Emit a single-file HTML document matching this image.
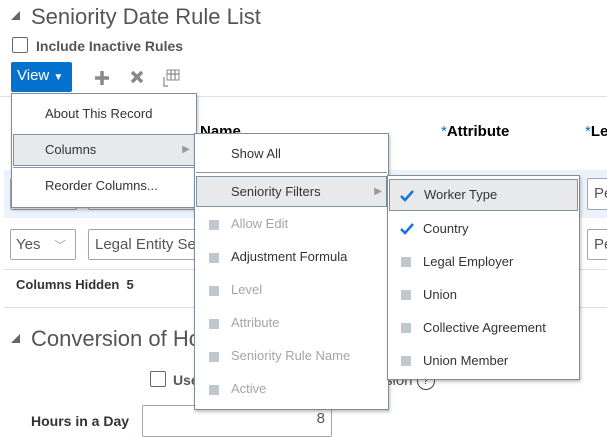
<!DOCTYPE html>
<html><head><style>
body{margin:0;width:607px;height:420px;overflow:hidden;background:#fff;font-family:"Liberation Sans",Arial,sans-serif;position:relative}
.a{position:absolute;white-space:nowrap}
.tri{width:0;height:0;border-left:9px solid transparent;border-bottom:9px solid #666;}
.menu{position:absolute;background:#fff;border:1px solid #7f8c99;box-shadow:1px 2px 3px rgba(0,0,0,.25)}
.it{position:absolute;left:0;right:0;font-size:13px;color:#333}
.hl{background:#e8e9eb;border:1px solid #7d93a8}
.sq{position:absolute;width:10px;height:10px;background:#c0c7ce}
.g{color:#a5a5a5}
.inp{position:absolute;border:1px solid #9da6ae;background:#fff;border-radius:2px;font-size:15px;color:#555}
</style></head><body>
<div class="a tri" style="left:11px;top:11px"></div>
<div class="a" style="left:31px;top:4px;font-size:22px;color:#555;font-weight:300">Seniority Date Rule List</div>
<div class="a" style="left:12px;top:37px;width:14px;height:14px;border:1px solid #666;border-radius:2px"></div>
<div class="a" style="left:36px;top:38px;font-size:14px;color:#555;font-weight:bold">Include Inactive Rules</div>
<div class="a" style="left:11px;top:62px;width:61px;height:30px;background:#0572ce;border-radius:2px;color:#fff;font-size:15px;line-height:28px;text-indent:6px">View <span style="font-size:10px">▼</span></div>
<svg class="a" style="left:94px;top:69px" width="90" height="18"><path d="M8 2v14M1 9h14" stroke="#888" stroke-width="3.5"/><path d="M38 3l10 10M48 3l-10 10" stroke="#888" stroke-width="3.5"/><rect x="73" y="1" width="12" height="10" fill="none" stroke="#888" stroke-width="1"/><path d="M73 5h12M77 1v10M81 1v10M70 8v9h4" stroke="#888" stroke-width="1.2" fill="none"/></svg>
<div class="a" style="left:0;top:96px;width:607px;height:1px;background:#dde1e5"></div>
<div class="a" style="left:200px;top:123px;font-size:15px;font-weight:bold;color:#000">Name</div>
<div class="a" style="left:441px;top:123px;font-size:15px;font-weight:bold;color:#000"><span style="color:#0572ce;font-weight:normal">*</span>Attribute</div>
<div class="a" style="left:585px;top:123px;font-size:15px;font-weight:bold;color:#000"><span style="color:#0572ce;font-weight:normal">*</span>Le</div>
<div class="a" style="left:4px;top:170px;width:603px;height:48px;background:#eaf3fc"></div>
<div class="inp" style="left:10px;top:178px;width:65px;height:30px"></div>
<div class="inp" style="left:88px;top:178px;width:200px;height:30px"></div>
<div class="inp" style="left:587px;top:178px;width:30px;height:30px;line-height:30px;text-indent:6px">Pe</div>
<div class="inp" style="left:10px;top:229px;width:64px;height:29px;line-height:29px;text-indent:5px">Yes <span style="color:#999;font-size:11px;margin-left:10px">﹀</span></div>
<div class="inp" style="left:88px;top:229px;width:200px;height:29px;line-height:29px;text-indent:6px">Legal Entity Se</div>
<div class="inp" style="left:587px;top:229px;width:30px;height:29px;line-height:29px;text-indent:6px">Pe</div>
<div class="a" style="left:4px;top:269px;width:603px;height:1px;background:#dde1e5"></div>
<div class="a" style="left:16px;top:277px;font-size:13px;font-weight:bold;color:#333">Columns Hidden&nbsp; 5</div>
<div class="a" style="left:4px;top:307px;width:603px;height:1px;background:#dde1e5"></div>
<div class="a tri" style="left:11px;top:334px"></div>
<div class="a" style="left:31px;top:326px;font-size:22px;color:#555;font-weight:300">Conversion of Hours</div>
<div class="a" style="left:150px;top:371px;width:14px;height:14px;border:1px solid #666;border-radius:2px"></div>
<div class="a" style="left:173px;top:372px;font-size:14px;font-weight:bold;color:#555">Use</div>
<div class="a" style="left:385px;top:372px;font-size:15px;color:#555">sion <span style="display:inline-block;width:16px;height:16px;border:1.5px solid #444;border-radius:50%;font-size:11px;text-align:center;line-height:16px;vertical-align:middle">?</span></div>
<div class="a" style="left:31px;top:413px;font-size:14px;font-weight:bold;color:#333">Hours in a Day</div>
<div class="inp" style="left:142px;top:405px;width:188px;height:30px"><span style="position:absolute;right:6px;top:4px">8</span></div>

<div class="menu" style="left:11px;top:93px;width:184px;height:113px">
<div class="it" style="top:12px;left:33px">About This Record</div>
<div class="it hl" style="top:40px;height:30px;line-height:30px;left:1px;right:1px;text-indent:31px">Columns<span style="position:absolute;right:4px;color:#999;font-size:10px">▶</span></div>
<div class="a" style="left:1px;right:1px;top:73px;height:1px;background:#8a99a8"></div>
<div class="it" style="top:84px;left:33px">Reorder Columns...</div>
</div>

<div class="menu" style="left:194px;top:133px;width:193px;height:275px">
<div class="a" style="left:1px;right:1px;top:38px;height:1px;background:#8a99a8"></div>
<div class="it" style="top:12px;left:36px">Show All</div>
<div class="it hl" style="top:42px;height:29px;line-height:29px;left:1px;right:1px;text-indent:34px">Seniority Filters<span style="position:absolute;right:4px;color:#999;font-size:10px">▶</span></div>
<div class="sq" style="left:14px;top:86px"></div><div class="it g" style="top:82px;left:36px">Allow Edit</div>
<div class="sq" style="left:14px;top:119px"></div><div class="it" style="top:115px;left:36px">Adjustment Formula</div>
<div class="sq" style="left:14px;top:152px"></div><div class="it g" style="top:148px;left:36px">Level</div>
<div class="sq" style="left:14px;top:185px"></div><div class="it g" style="top:181px;left:36px">Attribute</div>
<div class="sq" style="left:14px;top:218px"></div><div class="it g" style="top:214px;left:36px">Seniority Rule Name</div>
<div class="sq" style="left:14px;top:251px"></div><div class="it g" style="top:247px;left:36px">Active</div>
</div>

<div class="menu" style="left:387px;top:175px;width:191px;height:203px">
<div class="it hl" style="top:3px;height:30px;line-height:30px;left:1px;right:1px;text-indent:34px">Worker Type</div>
<svg class="a" style="left:12px;top:14px" width="14" height="12"><path d="M1 6l4 4 8-9" stroke="#1a73d9" stroke-width="2.5" fill="none"/></svg>
<svg class="a" style="left:12px;top:47px" width="14" height="12"><path d="M1 6l4 4 8-9" stroke="#1a73d9" stroke-width="2.5" fill="none"/></svg>
<div class="it" style="top:45px;left:35px">Country</div>
<div class="sq" style="left:13px;top:81px"></div><div class="it" style="top:78px;left:35px">Legal Employer</div>
<div class="sq" style="left:13px;top:114px"></div><div class="it" style="top:111px;left:35px">Union</div>
<div class="sq" style="left:13px;top:147px"></div><div class="it" style="top:144px;left:35px">Collective Agreement</div>
<div class="sq" style="left:13px;top:180px"></div><div class="it" style="top:177px;left:35px">Union Member</div>
</div>
</body></html>
